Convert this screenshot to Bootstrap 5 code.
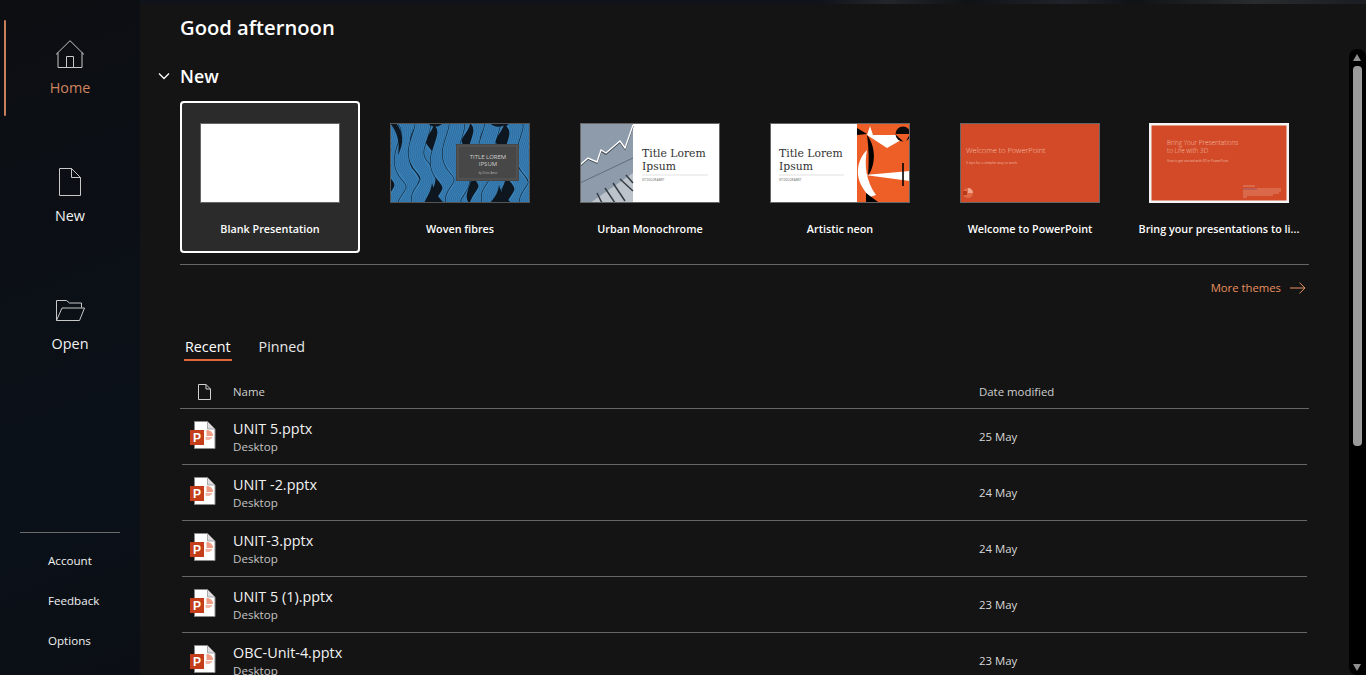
<!DOCTYPE html>
<html lang="en">
<head>
<meta charset="utf-8">
<title>PowerPoint Home</title>
<link rel="stylesheet" href="https://cdn.jsdelivr.net/npm/bootstrap@5.3.0/dist/css/bootstrap.min.css">
<style>
html,body{height:675px;overflow:hidden}
body{font-family:"Open Sans","Noto Sans","Liberation Sans",sans-serif;background:#0c1016;color:#fff}
.pp-shell{height:675px;background:linear-gradient(90deg,#10141a 0 60%,#24252a 65%,#101216 71%,#22232a 78%,#101216 83%,#2a2b2f 92%,#1b1d22)}
.pp-side{width:140px;flex:none;background:linear-gradient(160deg,#0c0e12,#0b1119 70%,#0b0f15);height:675px;padding-top:20px}
.pp-navitem{display:block;position:relative;height:96px;margin-bottom:32px;padding-top:20px;text-align:center;color:#f2f2f2;text-decoration:none;font-size:14.4px;line-height:20px}
.pp-navitem svg{display:block;margin:0 auto 10px;fill:none;stroke:#c8c8c8;stroke-width:1}
.pp-navitem.pp-active{color:#cf8560}
.pp-navitem.pp-active::before{content:"";position:absolute;left:4px;top:0;bottom:0;width:2px;background:#c97f5c;border-radius:1px}
.pp-sidefoot{margin-top:auto;padding-bottom:14px}
.pp-sidefoot hr{margin:0 20px 8px;border-color:#6a6a6a;opacity:1}
.pp-sidefoot a{display:block;height:40px;line-height:40px;padding-left:48px;font-size:11.6px;color:#f2f2f2;text-decoration:none}
.pp-main{margin-top:4px;background:#141414;height:671px;overflow:hidden;min-width:0}
.pp-body{width:1209px;padding-left:40px;padding-right:40px;flex:none}
.pp-greet{font-size:20.2px;font-weight:600;line-height:28px;padding-top:9px;margin:0}
.pp-newhead{margin:23px 0 0 -22px;height:24px}
.pp-newhead h2{font-size:17.8px;font-weight:600;line-height:24px;margin:0 0 0 10px}
.pp-tiles{margin-top:13px;gap:10px}
.pp-tile{width:180px;height:152px;flex:none;padding-top:22px;border-radius:4px;text-align:center;border:0}
.pp-tile:last-child{margin-left:-1px}
.pp-tile.pp-sel{background:#2b2b2b;box-shadow:inset 0 0 0 2px #fff;}
.pp-tile svg{display:block;margin:0 auto;width:140px;height:80px}
.pp-blank{width:140px;height:80px;margin:0 auto;background:#fff;border:1px solid #666}
.pp-tile p{margin:17px 0 0;font-size:10.8px;font-weight:600;line-height:17px;white-space:nowrap}
.pp-rule{margin:11px 0 0;border-color:#666;opacity:1}
.pp-more{height:34px;margin-top:6px;color:#e8915f;font-size:11.3px;font-weight:500;gap:9px;padding-right:3px}
.pp-more svg{fill:none;stroke:#e8915f;stroke-width:1}
.pp-tabs{margin-top:32px;gap:26px;padding-left:4px;height:28px}
.pp-tab{font-size:14.3px;line-height:20px;color:#e6e6e6;text-decoration:none;display:block;height:24px;padding:0 1px}
.pp-tab.pp-on{color:#fff;border-bottom:2px solid #e0683a}
.pp-head{height:48px;margin-top:-4px;padding-top:15px;border-bottom:1px solid #666;font-size:11.4px;color:#cfcfcf}
.pp-c1{width:53px;flex:none}
.pp-c2{width:746px;flex:none}
.pp-head .pp-c1{padding-left:18px}
.pp-head svg{display:block;fill:none;stroke:#d0d0d0;stroke-width:1}
.pp-rows{margin:0 2px;background:transparent;border-radius:0}
.pp-row{background:transparent;color:#fff;height:56px;padding:0;border:0;border-bottom:1px solid #666;border-radius:0}
.pp-row .pp-c1{width:51px;padding-left:8px}
.pp-row svg{display:block;width:26px;height:28px;margin-top:-3px}
.pp-fname{font-size:14.4px;line-height:19px;color:#f2f2f2}
.pp-floc{font-size:11.6px;line-height:17px;color:#c4c4c4}
.pp-date{font-size:11.4px;color:#d8d8d8}
.pp-scroll{width:17px;margin-left:auto;margin-top:45px;height:626px;background:#000;border-radius:8px 8px 0 8px;position:relative;flex:none}
.pp-thumb{position:absolute;left:4px;top:17px;width:9px;height:380px;background:#9b9b9b;border-radius:4px}
.pp-up,.pp-down{position:absolute;left:4px;width:0;height:0;border-left:4.5px solid transparent;border-right:4.5px solid transparent}
.pp-up{top:5px;border-bottom:7px solid #8f8f8f}
.pp-down{bottom:4px;border-top:7px solid #8f8f8f}
</style>
</head>
<body>
<svg width="0" height="0" class="position-absolute">
  <defs>
    <symbol id="pptico" viewBox="0 0 26 28">
      <path d="M4.500.5h13l7.500 7.500v19.500h-20.500z" fill="#fff" stroke="#8a8a8a"/>
      <path d="M17.500.5v7.500h7.500z" fill="#dcdcdc" stroke="#8a8a8a" stroke-width=".7"/>
      <path d="M16.500 9a6 6 0 0 1 6.500 6h-6.500z" fill="#ee9c82"/>
      <path d="M15.500 16h7a5 5 0 0 1-7 2.500z" fill="#f3b7a5"/>
      <rect x="0" y="9" width="14" height="15" fill="#c43e1c"/>
      <text x="7" y="21" text-anchor="middle" font-family="Liberation Sans" font-weight="700" font-size="12" fill="#fff">P</text>
    </symbol>
    <path id="wvp" d="M0-6C16 12-14 30 4 50S-8 74 4 90" fill="none"/>
    <g id="strand">
      <use href="#wvp" stroke="#0e1720" stroke-width="16"/>
      <use href="#wvp" stroke="#3a81b8" stroke-width="15"/>
      <use href="#wvp" x="-6" stroke="#1f5278" stroke-width=".4"/>
      <use href="#wvp" x="-4" stroke="#1f5278" stroke-width=".4"/>
      <use href="#wvp" x="-2" stroke="#1f5278" stroke-width=".4"/>
      <use href="#wvp" stroke="#1f5278" stroke-width=".4"/>
      <use href="#wvp" x="2" stroke="#1f5278" stroke-width=".4"/>
      <use href="#wvp" x="4" stroke="#1f5278" stroke-width=".4"/>
      <use href="#wvp" x="6" stroke="#1f5278" stroke-width=".4"/>
    </g>
  </defs>
</svg>

<div class="d-flex pp-shell">
  <aside class="d-flex flex-column pp-side">
    <a class="pp-navitem pp-active" href="#">
      <svg width="30" height="28" viewBox="0 0 30 28"><path d="M1 14.500 15 .7 29 14.500M3 12.500V27.500H27V12.500M11.500 27.500V16.500H18.500V27.500"/></svg>
      Home
    </a>
    <a class="pp-navitem" href="#">
      <svg width="22" height="28" viewBox="0 0 22 28"><path d="M.5.5H12.500L21.500 9.500V27.500H.5zM12.500.5V9.500H21.500"/></svg>
      New
    </a>
    <a class="pp-navitem" href="#">
      <svg width="30" height="28" viewBox="0 0 30 28"><path d="M1.500 24.500V4.500H11.500L14.500 7H26.500V11.500M1.500 24.500H24.500L29.500 12H7L1.500 24.500"/></svg>
      Open
    </a>
    <div class="pp-sidefoot">
      <hr>
      <a href="#">Account</a>
      <a href="#">Feedback</a>
      <a href="#">Options</a>
    </div>
  </aside>

  <main class="d-flex flex-grow-1 pp-main">
    <div class="pp-body">
      <h1 class="pp-greet">Good afternoon</h1>
      <div class="d-flex align-items-center pp-newhead">
        <svg width="12" height="8" viewBox="0 0 12 8" fill="none" stroke="#fff" stroke-width="1.300"><path d="M1 1.500l5 5 5-5"/></svg>
        <h2>New</h2>
      </div>

      <div class="d-flex pp-tiles">
        <div class="pp-tile pp-sel">
          <div class="pp-blank"></div>
          <p>Blank Presentation</p>
        </div>
        <div class="pp-tile">
          <svg viewBox="0 0 140 80">
            <rect width="140" height="80" fill="#0e1720"/>
            <use href="#strand" transform="translate(2 0)"/>
            <use href="#strand" transform="translate(14 2)"/>
            <use href="#strand" transform="translate(38 80) scale(-1 -1)"/>
            <use href="#strand" transform="translate(28 -6)"/>
            <use href="#strand" transform="translate(50 3)"/>
            <use href="#strand" transform="translate(74 80) scale(-1 -1)"/>
            <use href="#strand" transform="translate(62 -5)"/>
            <use href="#strand" transform="translate(86 1)"/>
            <use href="#strand" transform="translate(108 80) scale(-1 -1)"/>
            <use href="#strand" transform="translate(98 -8)"/>
            <use href="#strand" transform="translate(122 4)"/>
            <use href="#strand" transform="translate(136 -3)"/>
            <g fill="#0e1720">
              <path d="M38 0C42 5 48 5 53 0z"/><path d="M100 0C104 5 112 5 118 0z"/>
              <path d="M34 80C38 72 41 68 42 60 44 68 48 74 54 80z"/><path d="M100 80C105 74 108 70 109 62 111 70 116 76 122 80z"/>
              <path d="M6 0C14 10 14 20 8 32 10 20 8 10 0 0z"/>
            </g>
            <rect x="66" y="21" width="63" height="37" fill="#474747"/>
            <rect x="68" y="23" width="59" height="33" fill="none" stroke="#6a6a6a" stroke-width=".6"/>
            <text x="98" y="36" text-anchor="middle" font-size="6" fill="#cfcfcf" font-family="Open Sans">TITLE LOREM</text>
            <text x="98" y="43" text-anchor="middle" font-size="6" fill="#cfcfcf" font-family="Open Sans">IPSUM</text>
            <text x="98" y="51" text-anchor="middle" font-size="2.800" fill="#bbb" font-family="Open Sans">by Dolor Amet</text>
            <rect x=".5" y=".5" width="139" height="79" fill="none" stroke="#555"/>
          </svg>
          <p>Woven fibres</p>
        </div>
        <div class="pp-tile">
          <svg viewBox="0 0 140 80">
            <rect width="140" height="80" fill="#fff"/>
            <rect width="53" height="80" fill="#8d9baa"/>
            <path d="M0 60 53 35" stroke="#56626e" stroke-width=".8"/>
            <path d="M53 50 10 80H53z" fill="#bcc3ca"/>
            <path d="M17 70 22 80M25 65 35 80M33 60 45 78M40 56 53 68M46 52 53 60" stroke="#343c44" stroke-width="1.500" fill="none"/>
            <path d="M0 43 8 36 17 40 21 28 26 31 40 19 45 26 53 3" stroke="#3d4650" stroke-width="1.500" fill="none"/>
            <path d="M0 42 8 35 17 39 21 27 26 30 40 18 45 25 53 2" stroke="#fff" stroke-width="1.400" fill="none"/>
            <text x="62" y="34" font-size="10.800" fill="#333" font-family="DejaVu Serif">Title Lorem</text>
            <text x="62" y="47" font-size="10.800" fill="#333" font-family="DejaVu Serif">Ipsum</text>
            <path d="M62 52H128" stroke="#ccc" stroke-width=".6"/>
            <text x="62" y="58" font-size="2.800" fill="#555" font-family="Open Sans">SIT DOLOR AMET</text>
            <rect x=".5" y=".5" width="139" height="79" fill="none" stroke="#666"/>
          </svg>
          <p>Urban Monochrome</p>
        </div>
        <div class="pp-tile">
          <svg viewBox="0 0 140 80">
            <rect width="140" height="80" fill="#fff"/>
            <rect x="87" width="53" height="80" fill="#ee5f28"/>
            <path d="M87 5 97 11 87 12z" fill="#000"/>
            <path d="M97 12 100 3 103 12H140L117 25z" fill="#fff"/>
            <circle cx="133" cy="11" r="7.500" fill="#0a0a0a"/>
            <path d="M125 11H140L135 20z" fill="#ee5f28"/>
            <path d="M88 52C87 40 92 32 97 27 94 42 96 58 106 72L100 74C94 68 89 60 88 52z" fill="#fff"/>
            <path d="M97 12C105 22 107 40 98 53 99 40 99 26 97 12z" fill="#000"/>
            <path d="M95 52 140 48V58z" fill="#fff"/>
            <path d="M133 40V63" stroke="#000" stroke-width="1.600"/>
            <path d="M96 70 108 79H96z" fill="#000"/>
            <text x="9" y="34" font-size="10.800" fill="#333" font-family="DejaVu Serif">Title Lorem</text>
            <text x="9" y="47" font-size="10.800" fill="#333" font-family="DejaVu Serif">Ipsum</text>
            <path d="M9 52H74" stroke="#ccc" stroke-width=".6"/>
            <text x="9" y="58" font-size="2.800" fill="#555" font-family="Open Sans">SIT DOLOR AMET</text>
            <rect x=".5" y=".5" width="139" height="79" fill="none" stroke="#666"/>
          </svg>
          <p>Artistic neon</p>
        </div>
        <div class="pp-tile">
          <svg viewBox="0 0 140 80">
            <rect width="140" height="80" fill="#d24a27"/>
            <text x="6" y="30" font-size="7.400" fill="#f3c0ae" font-family="Open Sans" font-weight="300">Welcome to PowerPoint</text>
            <text x="6" y="41" font-size="3.500" fill="#f0b8a5" font-family="Open Sans">5 tips for a simpler way to work</text>
            <circle cx="8" cy="70" r="5" fill="#e06a48"/>
            <path d="M8 65a5 5 0 0 1 5 5h-5z" fill="#f0a58e"/>
            <rect x="3" y="68" width="4" height="4" fill="#b8381a"/>
            <rect x=".5" y=".5" width="139" height="79" fill="none" stroke="#666"/>
          </svg>
          <p>Welcome to PowerPoint</p>
        </div>
        <div class="pp-tile">
          <svg viewBox="0 0 140 80">
            <rect width="140" height="80" fill="#f4f4f4"/>
            <rect x="2.500" y="2.500" width="135" height="75" fill="#d24a27"/>
            <text x="18" y="22" font-size="6.400" fill="#f3c0ae" font-family="Open Sans" font-weight="300">Bring Your Presentations</text>
            <text x="18" y="30" font-size="6.400" fill="#f3c0ae" font-family="Open Sans" font-weight="300">to Life with 3D</text>
            <text x="18" y="39" font-size="3.200" fill="#f0b8a5" font-family="Open Sans">How to get started with 3D in PowerPoint</text>
            <g stroke="#eeb19d" stroke-width=".6"><path d="M94 63h12M94 66h38M94 68h38M94 70h36M94 72h30M94 74h4"/></g>
            <path d="M94 66h14" stroke="#7b3f66" stroke-width=".7"/>
          </svg>
          <p>Bring your presentations to li...</p>
        </div>
      </div>

      <hr class="pp-rule">
      <div class="d-flex align-items-center justify-content-end pp-more">
        <span>More themes</span>
        <svg width="16" height="12" viewBox="0 0 16 12"><path d="M0 6H15M9.500.7 15 6 9.500 11.300"/></svg>
      </div>

      <div class="d-flex pp-tabs">
        <a class="pp-tab pp-on" href="#">Recent</a>
        <a class="pp-tab" href="#">Pinned</a>
      </div>

      <div class="d-flex align-items-center pp-head">
        <div class="pp-c1"><svg width="13" height="16" viewBox="0 0 13 16"><path d="M.5.5H8L12.500 5V15.500H.5zM8 .5V5H12.500"/></svg></div>
        <div class="pp-c2">Name</div>
        <div>Date modified</div>
      </div>

      <div class="list-group pp-rows">
        <div class="list-group-item d-flex align-items-center pp-row">
          <div class="pp-c1"><svg><use href="#pptico"/></svg></div>
          <div class="pp-c2"><div class="pp-fname">UNIT 5.pptx</div><div class="pp-floc">Desktop</div></div>
          <div class="pp-date">25 May</div>
        </div>
        <div class="list-group-item d-flex align-items-center pp-row">
          <div class="pp-c1"><svg><use href="#pptico"/></svg></div>
          <div class="pp-c2"><div class="pp-fname">UNIT -2.pptx</div><div class="pp-floc">Desktop</div></div>
          <div class="pp-date">24 May</div>
        </div>
        <div class="list-group-item d-flex align-items-center pp-row">
          <div class="pp-c1"><svg><use href="#pptico"/></svg></div>
          <div class="pp-c2"><div class="pp-fname">UNIT-3.pptx</div><div class="pp-floc">Desktop</div></div>
          <div class="pp-date">24 May</div>
        </div>
        <div class="list-group-item d-flex align-items-center pp-row">
          <div class="pp-c1"><svg><use href="#pptico"/></svg></div>
          <div class="pp-c2"><div class="pp-fname">UNIT 5 (1).pptx</div><div class="pp-floc">Desktop</div></div>
          <div class="pp-date">23 May</div>
        </div>
        <div class="list-group-item d-flex align-items-center pp-row">
          <div class="pp-c1"><svg><use href="#pptico"/></svg></div>
          <div class="pp-c2"><div class="pp-fname">OBC-Unit-4.pptx</div><div class="pp-floc">Desktop</div></div>
          <div class="pp-date">23 May</div>
        </div>
      </div>
    </div>
    <div class="pp-scroll">
      <span class="pp-up"></span>
      <span class="pp-thumb"></span>
      <span class="pp-down"></span>
    </div>
  </main>
</div>
<script src="https://cdn.jsdelivr.net/npm/bootstrap@5.3.0/dist/js/bootstrap.bundle.min.js"></script>
</body>
</html>
